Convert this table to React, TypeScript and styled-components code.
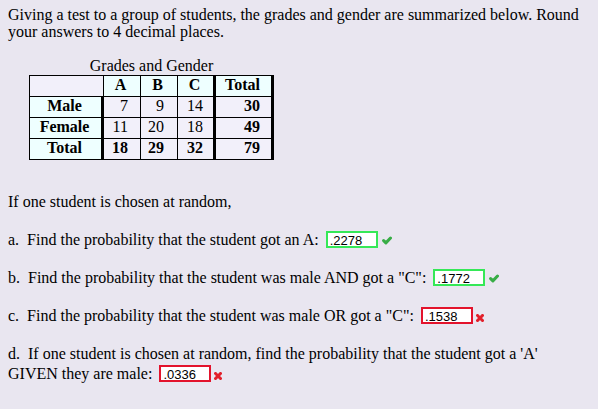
import React from "react";
import styled, { createGlobalStyle } from "styled-components";

const Global = createGlobalStyle`
  html, body {
    margin: 0;
    background: #e9e6f0;
  }
  body {
    font-family: "Liberation Serif", "Times New Roman", serif;
    font-size: 16px;
    color: #000;
  }
`;

const Page = styled.div`
  padding: 6px 8px 0;
`;

const Intro = styled.p`
  margin: 0;
  line-height: 17px;
`;

const TableWrap = styled.div`
  margin-top: 17px;
  padding-left: 21px;
`;

const Table = styled.table`
  border-collapse: separate;
  border-spacing: 0;
  border-left: 1px solid #000;
  border-top: 1px solid #000;
`;

const Caption = styled.caption`
  line-height: 18px;
  text-align: center;
`;

const Cell = styled.td<{
  $w: number;
  $pr: number;
  $br: number;
  $head: boolean;
  $bold: boolean;
  $align: "left" | "center" | "right";
}>`
  box-sizing: content-box;
  width: ${(p) => p.$w - p.$pr - p.$br}px;
  padding: 0 ${(p) => p.$pr}px 2px 0;
  height: 18px;
  line-height: 18px;
  border-right: ${(p) => p.$br}px solid #000;
  border-bottom: 1px solid #000;
  background: ${(p) => (p.$head ? "#eeffff" : "#f2f0fa")};
  font-weight: ${(p) => (p.$bold ? "bold" : "normal")};
  text-align: ${(p) => p.$align};
  white-space: nowrap;
`;

const Question = styled.p<{ $first?: boolean }>`
  margin: ${(p) => (p.$first ? 32 : 18)}px 0 0;
  line-height: 20px;
`;

const Answer = styled.input<{ $ok: boolean }>`
  box-sizing: border-box;
  width: 52px;
  height: 17px;
  margin: 0 0 0 3px;
  padding: 2px 1px 0 2px;
  border: 2px solid ${(p) => (p.$ok ? "#35e857" : "#e3132c")};
  border-radius: 0;
  background: #fff;
  font-family: "Liberation Sans", Arial, sans-serif;
  font-size: 13px;
  color: #000;
  vertical-align: baseline;
  outline: none;
`;

const Mark = styled.svg<{ $ok: boolean }>`
  margin-left: ${(p) => (p.$ok ? 4 : 3)}px;
  vertical-align: ${(p) => (p.$ok ? "0px" : "-1px")};
`;

const CheckMark = () => (
  <Mark $ok width="10" height="9" viewBox="0 0 10 9">
    <path
      d="M1.6 4.6 L3.9 6.9 L8.5 2"
      fill="none"
      stroke="#38ad46"
      strokeWidth="3"
      strokeLinecap="round"
      strokeLinejoin="round"
    />
  </Mark>
);

const CrossMark = () => (
  <Mark $ok={false} width="8" height="8" viewBox="0 0 8 8">
    <path
      d="M1.5 1.5 L6.5 6.5 M6.5 1.5 L1.5 6.5"
      fill="none"
      stroke="#e2202b"
      strokeWidth="3"
      strokeLinecap="square"
    />
  </Mark>
);

type Col = { w: number; pr: number; headPr: number };
const COLS: Col[] = [
  { w: 74, pr: 2, headPr: 2 },
  { w: 37, pr: 12, headPr: 3 },
  { w: 37, pr: 13, headPr: 3 },
  { w: 38, pr: 10, headPr: 2 },
  { w: 58, pr: 11, headPr: 2 },
];
const HEAD_BORDERS = [1, 1, 1, 3, 3];
const BODY_BORDERS = [3, 1, 1, 3, 3];

const HEADER = ["", "A", "B", "C", "Total"];
const ROWS: { label: string; values: string[]; bold: boolean }[] = [
  { label: "Male", values: ["7", "9", "14", "30"], bold: false },
  { label: "Female", values: ["11", "20", "18", "49"], bold: false },
  { label: "Total", values: ["18", "29", "32", "79"], bold: true },
];

const Answered = ({ value, ok }: { value: string; ok: boolean }) => (
  <>
    <Answer $ok={ok} readOnly value={value} />
    {ok ? <CheckMark /> : <CrossMark />}
  </>
);

export default function App() {
  return (
    <>
      <Global />
      <Page>
        <Intro>
          Giving a test to a group of students, the grades and gender are summarized below. Round
          your answers to 4 decimal places.
        </Intro>
        <TableWrap>
          <Table>
            <Caption>Grades and Gender</Caption>
            <tbody>
              <tr>
                {HEADER.map((h, i) => (
                  <Cell
                    key={i}
                    $w={COLS[i].w}
                    $pr={COLS[i].headPr}
                    $br={HEAD_BORDERS[i]}
                    $head={i > 0}
                    $bold
                    $align="center"
                  >
                    {h}
                  </Cell>
                ))}
              </tr>
              {ROWS.map((r) => (
                <tr key={r.label}>
                  <Cell
                    $w={COLS[0].w}
                    $pr={COLS[0].pr}
                    $br={BODY_BORDERS[0]}
                    $head
                    $bold
                    $align="center"
                  >
                    {r.label}
                  </Cell>
                  {r.values.map((v, j) => (
                    <Cell
                      key={j}
                      $w={COLS[j + 1].w}
                      $pr={COLS[j + 1].pr}
                      $br={BODY_BORDERS[j + 1]}
                      $head={false}
                      $bold={r.bold || j === 3}
                      $align="right"
                    >
                      {v}
                    </Cell>
                  ))}
                </tr>
              ))}
            </tbody>
          </Table>
        </TableWrap>
        <Question $first>If one student is chosen at random,</Question>
        <Question>
          {"a.\u00a0 Find the probability that the student got an A: "}
          <Answered value=".2278" ok />
        </Question>
        <Question>
          {'b.\u00a0 Find the probability that the student was male AND got a "C": '}
          <Answered value=".1772" ok />
        </Question>
        <Question>
          {'c.\u00a0 Find the probability that the student was male OR got a "C": '}
          <Answered value=".1538" ok={false} />
        </Question>
        <Question>
          {"d.\u00a0 If one student is chosen at random, find the probability that the student got a 'A' GIVEN they are male: "}
          <Answered value=".0336" ok={false} />
        </Question>
      </Page>
    </>
  );
}
